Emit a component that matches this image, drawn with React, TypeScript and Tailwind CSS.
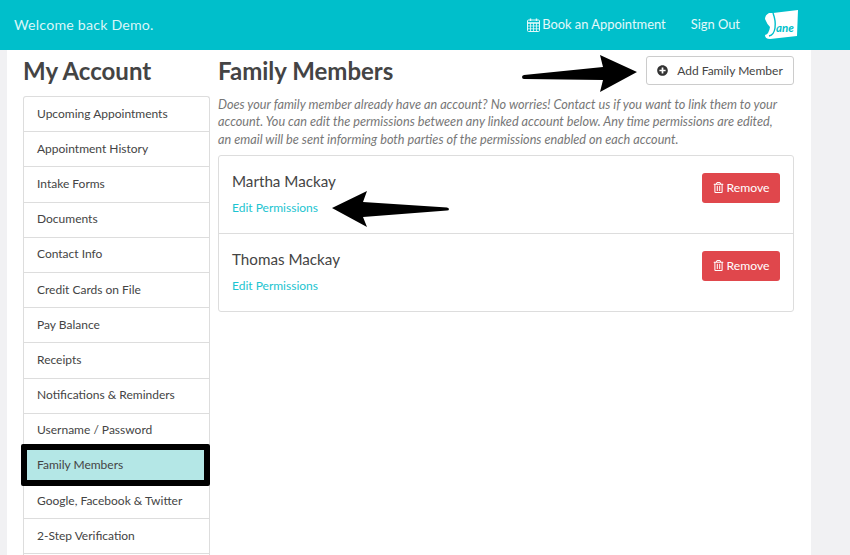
import React from 'react';
import { FaPlusCircle, FaRegTrashAlt } from 'react-icons/fa';

const menuItems = [
  'Upcoming Appointments',
  'Appointment History',
  'Intake Forms',
  'Documents',
  'Contact Info',
  'Credit Cards on File',
  'Pay Balance',
  'Receipts',
  'Notifications & Reminders',
  'Username / Password',
  'Family Members',
  'Google, Facebook & Twitter',
  '2-Step Verification',
];

const members = ['Martha Mackay', 'Thomas Mackay'];

const CalendarIcon = () => (
  <svg width="13" height="14" viewBox="0 0 13 14" fill="none" stroke="currentColor" strokeWidth="1" className="mr-[2px]">
    <rect x="0.5" y="2" width="12" height="11.5" rx="1" />
    <path d="M0.5 5 H12.5" strokeWidth="1.6" />
    <path d="M0.5 8 H12.5 M0.5 10.8 H12.5 M3.5 5 V13.5 M6.5 5 V13.5 M9.5 5 V13.5" strokeWidth="0.8" />
    <path d="M3.5 0.5 V3 M9.5 0.5 V3" strokeWidth="1.4" />
  </svg>
);

const Logo = () => (
  <svg width="36" height="30" viewBox="0 0 36 30">
    <path d="M9 3 L34 0 L33 26 L6 29 Q1 29 1 25 Q5 24 6 17 Q3 14 1 9 Q1 5 5 3 Z" fill="#fff" />
    <path d="M9 3 Q12 11 11 18 Q10 25 5 26" fill="none" stroke="#00bfcb" strokeWidth="1.4" />
    <text x="12" y="22" fontSize="11.5" fontStyle="italic" fontWeight="700" fontFamily="Lato, sans-serif" fill="#00bfcb">
      ane
    </text>
  </svg>
);

// hand drawn arrows on top of the screenshot
const RightArrow = () => (
  <svg className="absolute left-[520px] top-[50px]" width="120" height="44" viewBox="0 0 120 44">
    <path d="M2 27 Q2 25.5 4 25 L83 17 L80 5 L117 22 L80 42 L83 30 L4 29 Q2 29 2 27 Z" fill="#000" />
  </svg>
);

const LeftArrow = () => (
  <svg className="absolute left-[330px] top-[188px]" width="122" height="42" viewBox="0 0 122 42">
    <path d="M2 20 L37 3 L33 14 L117 19.5 Q119 20 119 21 Q119 22.5 117 22.5 L33 29 L37 39 Z" fill="#000" />
  </svg>
);

export default function App() {
  return (
    <div className="relative h-[555px] w-[850px] overflow-hidden bg-[#f1f1f3] font-['Lato',sans-serif] text-[#444]">
      <header className="flex h-[50px] items-center bg-[#00bfcb] pl-[14px] pr-[50px] text-white">
        <span className="text-[14.2px] tracking-[0.2px] text-[#d9f6f8]">Welcome back Demo.</span>
        <nav className="ml-auto flex items-center text-[12.9px] text-[#e4f9fa]">
          <CalendarIcon />
          <span>Book an Appointment</span>
          <span className="ml-[25px]">Sign Out</span>
          <span className="ml-[24px] flex">
            <Logo />
          </span>
        </nav>
      </header>

      <div className="ml-[7px] flex h-[505px] w-[804px] gap-[8px] bg-white pl-[16px]">
        <aside className="w-[187px] shrink-0">
          <h2 className="mt-[5px] h-[41px] text-[24px] leading-[32px] font-bold text-[#444]">My Account</h2>
          <ul className="h-[500px] rounded-t-[3px] border border-b-0 border-[#ddd]">
            {menuItems.map((item) => (
              <li
                key={item}
                className={`flex h-[35.2px] items-center border-b border-[#ddd] pb-[1px] pl-[13px] text-[12px] ${
                  item === 'Family Members' ? 'bg-[#b4e7e6]' : ''
                }`}
              >
                {item}
              </li>
            ))}
          </ul>
        </aside>

        <main className="w-[576px]">
          <div className="flex h-[47px] items-start justify-between">
            <h1 className="mt-[5px] text-[24px] leading-[32px] font-bold">Family Members</h1>
            <button className="mt-[6px] flex h-[29px] w-[148px] items-center justify-center rounded-[3px] border border-[#ccc] bg-white text-[12px]">
              <FaPlusCircle size={11} color="#333" className="mr-[9px]" />
              Add Family Member
            </button>
          </div>
          <p className="-mt-[1px] pr-[10px] text-[12.7px] leading-[17.3px] text-[#777] italic">
            Does your family member already have an account? No worries! Contact us if you want to link them to your
            account. You can edit the permissions between any linked account below. Any time permissions are edited,
            an email will be sent informing both parties of the permissions enabled on each account.
          </p>
          <div className="mt-[7px] rounded-[3px] border border-[#ddd]">
            {members.map((name, i) => (
              <div
                key={name}
                className={`flex justify-between pl-[13px] pr-[13px] ${i > 0 ? 'h-[78px] border-t border-[#ddd]' : 'h-[77px]'}`}
              >
                <div>
                  <div className="mt-[15px] text-[15.2px] leading-[20px]">{name}</div>
                  <a className="mt-[8px] block text-[12px] leading-[18px] text-[#1cc4d0]">Edit Permissions</a>
                </div>
                <button className="mt-[17px] flex h-[30px] w-[78px] items-center justify-center rounded-[3px] bg-[#e0474c] text-[12.2px] text-white">
                  <FaRegTrashAlt size={11} className="mr-[3px]" />
                  Remove
                </button>
              </div>
            ))}
          </div>
        </main>
      </div>

      {/* annotations */}
      <div className="absolute left-[21px] top-[444px] h-[42px] w-[189px] rounded-[2px] border-[6px] border-black" />
      <RightArrow />
      <LeftArrow />
    </div>
  );
}
